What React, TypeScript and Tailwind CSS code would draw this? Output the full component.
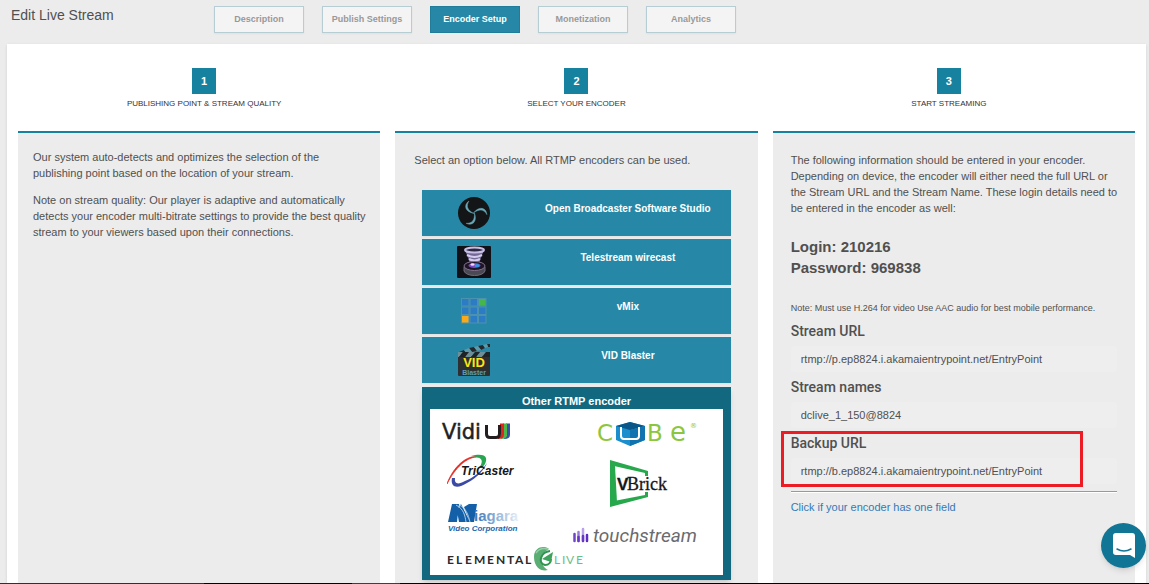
import React from "react";

const tabs = ["Description", "Publish Settings", "Encoder Setup", "Monetization", "Analytics"];

const steps = ["Publishing point & stream quality", "Select your encoder", "Start streaming"];

const ObsIcon = () => (
   <svg width="32" height="32" viewBox="0 0 32 32" fill="none">
      <circle cx="16" cy="16" r="16" fill="#131516" />
      <g stroke="#6aa9b8" fill="#6aa9b8" strokeWidth="0.400" strokeLinejoin="round">
         <path d="M11 4 C5 8 7 15 16 16.500 C9 13 8 9 11 4 Z" />
         <path d="M11 4 C5 8 7 15 16 16.500 C9 13 8 9 11 4 Z" transform="rotate(120 16 16)" />
         <path d="M11 4 C5 8 7 15 16 16.500 C9 13 8 9 11 4 Z" transform="rotate(240 16 16)" />
      </g>
   </svg>
);

const WirecastIcon = () => (
   <svg width="34" height="32" viewBox="0 0 34 32" fill="none">
      <rect width="34" height="32" rx="1" fill="#121117" />
      <path d="M8 4 L13 17 H22 L27 4 Z" fill="#8d80b4" opacity="0.8" />
      <ellipse cx="17.500" cy="4" rx="9.500" ry="2.500" fill="#2c2840" stroke="#c9bfe6" strokeWidth="2" />
      <path d="M10 9 Q17.500 13 25 9 M12 13 Q17.500 16 23 13" stroke="#d5cdef" strokeWidth="2" />
      <path d="M7 21 V25 C9 31 26 31 28 25 V21 Z" fill="#4b4954" stroke="#6f6c78" />
      <ellipse cx="17.500" cy="20" rx="10.500" ry="4.500" fill="#1c1626" stroke="#85718f" />
      <ellipse cx="17.500" cy="19.500" rx="6" ry="2.500" fill="#7a48c0" />
      <ellipse cx="20" cy="19.500" rx="2.500" ry="1.500" fill="#2a9de0" />
      <ellipse cx="15.500" cy="18.500" rx="2" ry="1.200" fill="#f3d8ff" />
   </svg>
);

const VmixIcon = () => (
   <svg width="26" height="26" viewBox="0 0 26 26" fill="#2c7cc5" stroke="#4a92ad" strokeWidth="1">
      {[0, 1, 2].map((row) =>
         [0, 1, 2].map((col) => (
            <rect
               key={`${row}-${col}`}
               x={col * 8.5 + 0.5}
               y={row * 8.5 + 0.5}
               width="7.500"
               height="7.500"
               fill={row === 0 && col === 2 ? "#45b649" : row === 2 && col === 0 ? "#fba919" : "#2c7cc5"}
            />
         ))
      )}
   </svg>
);

const VidBlasterIcon = () => (
   <svg width="34" height="34" viewBox="0 0 34 34">
      <rect x="1" y="13" width="32" height="20" rx="1" fill="#2d2f31" />
      <path d="M2 9 L7 7 L10 11 L4 13 Z M12 5 L17 4 L20 8 L15 9 Z M21 3 L26 2 L28 5 L24 7 Z M30 1 L33 1 L33 4 L31 4 Z" fill="#25282a" />
      <path d="M7 7 L12 5 L15 9 L10 11 Z M17 4 L21 3 L24 7 L20 8 Z M26 2 L30 1 L31 4 L28 5 Z" fill="#5f98a8" />
      <path d="M1 9 H6 L2 14 H1 Z M12 9 H18 L14 14 H8 Z M23 9 H29 L25 14 H19 Z" fill="#6d8f99" />
      <path d="M2 14 L6 9 H12 L8 14 Z M14 14 L18 9 H23 L19 14 Z M25 14 L29 9 H33 V14 Z" fill="#202325" />
      <text x="17" y="24" textAnchor="middle" fontFamily="Liberation Sans" fontSize="13" fontWeight="bold" fill="#ffe414">
         VID
      </text>
      <text x="17" y="32" textAnchor="middle" fontFamily="Liberation Sans" fontSize="7" fill="#5d9fb5">
         Blaster
      </text>
   </svg>
);

const encoders = [
   { name: "Open Broadcaster Software Studio", icon: <ObsIcon /> },
   { name: "Telestream wirecast", icon: <WirecastIcon /> },
   { name: "vMix", icon: <VmixIcon /> },
   { name: "VID Blaster", icon: <VidBlasterIcon /> },
];

const VidiuLogo = () => (
   <svg className="mt-[14px] overflow-visible" width="72" height="18" viewBox="0 0 72 18" fill="none">
      <text x="1" y="16" fontFamily="DejaVu Sans" fontSize="21" fill="#231f20" stroke="#231f20" strokeWidth="0.500">
         Vidi
      </text>
      <g strokeWidth="3">
         <path d="M65 2 H67.500 V12 Q67.500 14.500 63 14.500" stroke="#3b4fa8" />
         <path d="M62 2 H64.500 V12 Q64.500 14.500 60 14.500" stroke="#4db848" />
         <path d="M59 2 H61.500 V12 Q61.500 14.500 57 14.500" stroke="#e2251f" />
         <path d="M45.500 2 V11 Q45.500 14.500 49 14.500 H55 Q58.500 14.500 58.500 11 V2" stroke="#231f20" />
      </g>
   </svg>
);

const TricasterLogo = () => (
   <svg className="mt-3 ml-[6px]" width="72" height="36" viewBox="0 0 72 36" fill="none">
      <path d="M0 31 C6 14 20 1 32 4 C20 3 8 15 0 31 Z" fill="#e5281f" stroke="#e5281f" strokeWidth="0.700" />
      <path d="M24 3 C36 0 42 3 38 11 L35 15 H32 C37 8 36 4 24 3 Z" fill="#27a550" />
      <path d="M5 25 C3 35 11 36 20 30 C30 25 37 17 40 10 C34 19 26 25 18 28 C11 32 7 31 8 25 Z" fill="#3b4aa5" />
      <text x="14" y="22" fontFamily="Liberation Sans" fontSize="12" fontWeight="bold" fontStyle="italic" fill="#16161a">
         TriCaster
      </text>
   </svg>
);

const NiagaraLogo = () => (
   <svg className="mt-[13px] ml-[6px]" width="76" height="32" viewBox="0 0 76 32" fill="none">
      <defs>
         <linearGradient id="niagara" x1="26" y1="0" x2="71" y2="0" gradientUnits="userSpaceOnUse">
            <stop offset="0" stopColor="#2e6fb5" />
            <stop offset="1" stopColor="#e6eef8" />
         </linearGradient>
      </defs>
      <path d="M5 2 H12 L10 20 H1 Z M14 2 L23 20 H12 L10 9 Z M22 2 H30 L27 20 H23 L17 5 Z" fill="#1460a8" />
      <path d="M12 3 C19 6 21 12 23 20 M9 3 C17 7 18 14 19 20" stroke="#a8cae8" />
      <text x="27" y="19" fontFamily="Liberation Sans" fontSize="15" fontWeight="bold" fill="url(#niagara)">
         iagara
      </text>
      <text x="1" y="29" fontFamily="Liberation Sans" fontSize="8" fontWeight="bold" fontStyle="italic" fill="#1d66ab">
         Video Corporation
      </text>
   </svg>
);

const ElementalLogo = () => (
   <svg className="mt-[11px] ml-[6px]" width="136" height="28" viewBox="0 0 136 28" fill="none">
      <g fontFamily="Lato" fontSize="12">
         {"ELEMENTAL".split("").map((letter, i) => (
            <text key={i} x={[0, 9, 18, 27, 40, 49, 60, 68, 78][i]} y="19" fontWeight="bold" fill="#2b2b2c">
               {letter}
            </text>
         ))}
         {"LIVE".split("").map((letter, i) => (
            <text key={i} x={[107, 115, 119, 129][i]} y="19" fill="#6cbd84">
               {letter}
            </text>
         ))}
      </g>
      <path d="M102 4 C97 0 87 2 87 12 C87 23 95 27 101 25 C94 21 90 11 102 4 Z" fill="#5aad73" />
      <path d="M103 6 C94 7 90 18 98 20 C102 20 104 17 104 14" stroke="#2f9450" strokeWidth="2" />
      <path d="M95 14 L106 7 L104 17 Z" fill="#3da35c" />
      <path d="M89 8 Q93 2 101 4" stroke="#96cfa5" strokeWidth="1.500" />
   </svg>
);

const CubeLogo = () => (
   <svg className="mt-[10px] ml-5 overflow-visible" width="106" height="29" viewBox="0 0 106 29" fill="none">
      <g fontFamily="DejaVu Sans" fontSize="23" fill="#8cc63f">
         <text x="4" y="22">C</text>
         <text x="54" y="22">B</text>
         <text x="77" y="22" fontSize="26">e</text>
         <text x="97" y="9" fontSize="7">®</text>
      </g>
      <path d="M23 7 L37 3 L52 7 V21 L37 27 L23 21 Z" fill="#1b8fcd" />
      <path d="M23 7 L37 3 L52 7 L37 11 Z" fill="#0a5688" />
      <path d="M37 11 L52 7 V21 L37 27 Z" fill="#0f73af" />
      <path d="M28 8 V17 Q28 20 31 20 H43 Q46 20 46 17 V8" stroke="#fff" strokeWidth="2" />
   </svg>
);

const VbrickLogo = () => (
   <svg className="mt-[11px] ml-9" width="60" height="50" viewBox="0 0 60 50" fill="none">
      <path d="M1 1 L39 12 V17 H36 V14 L5 7 V42 L36 36 V33 H39 V38 L1 48 Z" fill="#28a84c" />
      <path d="M3 3 L6 7 L8 43 L3 47 Z" fill="#28a84c" />
      <g fill="#17181a" stroke="#17181a" strokeWidth="0.300">
         <text x="8" y="31" fontFamily="Liberation Sans" fontSize="17" fontWeight="bold">V</text>
         <text x="18" y="31" fontFamily="Liberation Serif" fontSize="18">Brick</text>
      </g>
   </svg>
);

const TouchstreamLogo = () => (
   <svg className="mt-4 overflow-visible" width="132" height="22" viewBox="0 0 132 22" fill="none">
      <g strokeWidth="2.500" strokeLinecap="round">
         <path d="M1.500 9 V16" stroke="#7044c7" />
         <path d="M5.500 7 V16" stroke="#9a7bdb" />
         <path d="M10 4 V16" stroke="#b8a1e8" />
         <path d="M14 10 V16" stroke="#5d2cc0" />
         <path d="M5.500 12 V16 M10 11 V16" stroke="#6636c4" />
      </g>
      <text x="20" y="17" fontFamily="Roboto" fontSize="19" fontStyle="italic" fill="#6a6b6e">
         touchstream
      </text>
   </svg>
);

const Field = ({ id, label, value }: { id: string; label: string; value: string }) => (
   <div>
      <label htmlFor={id} className="block font-[Roboto] text-sm leading-[18px] font-medium">
         {label}
      </label>
      <input
         id={id}
         type="text"
         readOnly
         value={value}
         className="mt-[6px] block h-[26px] w-full rounded-sm bg-[#eeeeee] px-[10px] text-[11px] outline-none"
      />
   </div>
);

const App: React.FC = () => {
   return (
      <div className="flex min-h-screen flex-col bg-[#ececec] font-['Liberation_Sans',sans-serif] text-[11px] leading-4 text-[#505050]">
         {/* Title and tabs */}
         <header className="flex h-11 shrink-0 items-start">
            <h1 className="w-[214px] shrink-0 pt-[6px] pl-[11px] text-sm leading-[18px]">Edit Live Stream</h1>
            <nav className="flex gap-[18px] pt-[6px]">
               {tabs.map((tab) => (
                  <button
                     key={tab}
                     type="button"
                     className={
                        tab === "Encoder Setup"
                           ? "h-[27px] w-[90px] border border-[#1f7d99] bg-[#2688a6] pb-[2px] text-[9px] leading-4 font-bold whitespace-nowrap text-white"
                           : "h-[27px] w-[90px] border border-[#b5cdd3] bg-[#f4f4f4] pb-[2px] text-[9px] leading-4 font-bold whitespace-nowrap text-[#999999] shadow-xs"
                     }
                  >
                     {tab}
                  </button>
               ))}
            </nav>
         </header>

         <main className="mr-[3px] ml-[7px] flex grow flex-col bg-white px-[11px] pt-6 shadow-sm">
            {/* Steps */}
            <ol className="grid h-[63px] shrink-0 grid-cols-3">
               {steps.map((step, i) => (
                  <li key={step} className="flex flex-col items-center">
                     <span className="flex h-[26px] w-6 items-center justify-center bg-[#17829f] font-bold text-white">
                        {i + 1}
                     </span>
                     <span className="mt-1 text-[8px] leading-3 whitespace-nowrap text-[#333333] uppercase">{step}</span>
                  </li>
               ))}
            </ol>

            <div className="grid grow grid-cols-3 gap-[15px]">
               <section className="border-t-2 border-[#17829f] bg-[#ececec] pt-4 pl-[15px]">
                  <p>
                     Our system auto-detects and optimizes the selection of the
                     <br />
                     publishing point based on the location of your stream.
                  </p>
                  <p className="mt-[11px]">
                     Note on stream quality: Our player is adaptive and automatically
                     <br />
                     detects your encoder multi-bitrate settings to provide the best quality
                     <br />
                     stream to your viewers based upon their connections.
                  </p>
               </section>

               {/* Encoder list */}
               <section className="border-t-2 border-[#17829f] bg-[#ececec] px-[27px] pt-[19px] pb-[3px]">
                  <p className="-ml-2">Select an option below. All RTMP encoders can be used.</p>
                  <div className="mt-[22px] flex flex-col gap-[3px]">
                     {encoders.map((encoder) => (
                        <button
                           key={encoder.name}
                           type="button"
                           className="grid h-[46px] grid-cols-3 items-center bg-[#2688a6] text-[10px] leading-4 font-bold text-white shadow-xs"
                        >
                           <span className="flex justify-center">{encoder.icon}</span>
                           <span className="col-span-2 pb-2 whitespace-nowrap">{encoder.name}</span>
                        </button>
                     ))}
                  </div>
                  <div className="mt-1 bg-[#12687f] px-2 pt-[6px] pb-[5px] shadow-md">
                     <h2 className="text-center font-bold text-white">Other RTMP encoder</h2>
                     <div className="flex h-[166px] bg-white pl-[11px]">
                        <div className="w-[132px] shrink-0">
                           <VidiuLogo />
                           <TricasterLogo />
                           <NiagaraLogo />
                           <ElementalLogo />
                        </div>
                        <div>
                           <CubeLogo />
                           <VbrickLogo />
                           <TouchstreamLogo />
                        </div>
                     </div>
                  </div>
               </section>

               {/* Stream credentials */}
               <section className="border-t-2 border-[#17829f] bg-[#ececec] px-[18px] pt-[19px]">
                  <p className="whitespace-nowrap">
                     The following information should be entered in your encoder.
                     <br />
                     Depending on device, the encoder will either need the full URL or
                     <br />
                     the Stream URL and the Stream Name. These login details need to
                     <br />
                     be entered in the encoder as well:
                  </p>
                  <p className="mt-5 text-[15px] leading-[21px] font-bold">
                     Login: 210216
                     <br />
                     Password: 969838
                  </p>
                  <p className="mt-[23px] text-[9px] leading-[14px] whitespace-nowrap">
                     Note: Must use H.264 for video Use AAC audio for best mobile performance.
                  </p>
                  <div className="mt-[7px] flex flex-col gap-[6px]">
                     <Field id="stream-url" label="Stream URL" value="rtmp://p.ep8824.i.akamaientrypoint.net/EntryPoint" />
                     <Field id="stream-names" label="Stream names" value="dclive_1_150@8824" />
                     <div className="relative">
                        <Field id="backup-url" label="Backup URL" value="rtmp://b.ep8824.i.akamaientrypoint.net/EntryPoint" />
                        <div className="pointer-events-none absolute -inset-y-[3px] right-[34px] -left-[10px] border-3 border-[#ed1c24]" />
                     </div>
                  </div>
                  <hr className="mt-[7px] border-[#999999] shadow-[0_1px_0_#ffffff]" />
                  <a href="#" className="mt-[7px] block text-[#337ab7]">
                     Click if your encoder has one field
                  </a>
               </section>
            </div>
         </main>

         <div className="flex h-px shrink-0 bg-black">
            <div className="w-[204px] bg-[#303030]" />
            <div className="ml-[148px] w-12 bg-[#3a3f42]" />
         </div>

         {/* Chat launcher */}
         <button
            type="button"
            aria-label="Open chat"
            className="fixed right-[3px] bottom-4 flex size-[45px] items-center justify-center rounded-full bg-[#117596] shadow-md"
         >
            <svg width="22" height="25" viewBox="0 0 22 25" fill="none">
               <path d="M3 0 H19 Q22 0 22 3 V25 L17 22 H3 Q0 22 0 19 V3 Q0 0 3 0 Z" fill="#fff" />
               <path d="M4 16 Q11 20 18 16" stroke="#117596" strokeWidth="1.500" strokeLinecap="round" />
            </svg>
         </button>
      </div>
   );
};

export default App;
